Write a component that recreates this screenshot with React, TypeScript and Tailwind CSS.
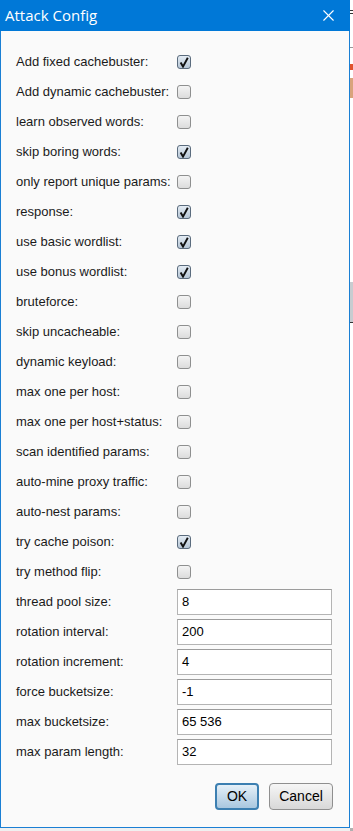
import { X } from "lucide-react"

type CheckRow = { label: string; checked: boolean }
type FieldRow = { label: string; value: string }

const checks: CheckRow[] = [
    { label: "Add fixed cachebuster:", checked: true },
    { label: "Add dynamic cachebuster:", checked: false },
    { label: "learn observed words:", checked: false },
    { label: "skip boring words:", checked: true },
    { label: "only report unique params:", checked: false },
    { label: "response:", checked: true },
    { label: "use basic wordlist:", checked: true },
    { label: "use bonus wordlist:", checked: true },
    { label: "bruteforce:", checked: false },
    { label: "skip uncacheable:", checked: false },
    { label: "dynamic keyload:", checked: false },
    { label: "max one per host:", checked: false },
    { label: "max one per host+status:", checked: false },
    { label: "scan identified params:", checked: false },
    { label: "auto-mine proxy traffic:", checked: false },
    { label: "auto-nest params:", checked: false },
    { label: "try cache poison:", checked: true },
    { label: "try method flip:", checked: false },
]

const fields: FieldRow[] = [
    { label: "thread pool size:", value: "8" },
    { label: "rotation interval:", value: "200" },
    { label: "rotation increment:", value: "4" },
    { label: "force bucketsize:", value: "-1" },
    { label: "max bucketsize:", value: "65 536" },
    { label: "max param length:", value: "32" },
]

function Box({ checked }: { checked: boolean }) {
    if (!checked) {
        return (
            <div className="w-[14px] h-[14px] rounded-[3px] border border-[#8e8f8f] bg-gradient-to-b from-[#f4f4f4] to-[#dcdcdc]" />
        )
    }
    return (
        <div className="w-[14px] h-[14px] rounded-[3px] border border-[#5a6b7d] bg-gradient-to-b from-[#e4ecf4] to-[#b6c6d6] flex items-center justify-center">
            <svg width="10" height="11" viewBox="0 0 10 11">
                <path d="M1.6 5.6 L4 9.6 L8.8 0.8" fill="none" stroke="#111" strokeWidth="1.9" />
            </svg>
        </div>
    )
}

export default function App() {
    return (
        <div className="w-[353px] h-[831px] flex bg-[#f0f0f0] overflow-hidden" style={{ fontFamily: '"Liberation Sans", Arial, sans-serif' }}>
            {/* dialog */}
            <div className="w-[350px] h-[828px] flex flex-col border-l border-r border-b border-[#1a7fd4] bg-[#fafafa] shrink-0">
                <div className="h-[31px] bg-[#0078d7] flex items-center justify-between pl-[5px] pr-[12px] -mx-px">
                    <span className="text-white text-[15px]" style={{ fontFamily: '"Open Sans", "Noto Sans", sans-serif' }}>Attack Config</span>
                    <X className="text-white w-[19px] h-[19px]" strokeWidth={1.4} />
                </div>

                <div className="pt-[16px] pl-[15px] flex flex-col text-[13px] text-[#1a1a1a]">
                    {checks.map((c) => (
                        <div key={c.label} className="h-[30px] flex items-center">
                            <div className="w-[161px] whitespace-nowrap">{c.label}</div>
                            <Box checked={c.checked} />
                        </div>
                    ))}
                    {fields.map((f) => (
                        <div key={f.label} className="h-[30px] flex items-center">
                            <div className="w-[161px]">{f.label}</div>
                            <div className="w-[155px] h-[26px] bg-white border border-[#b4b4b4] border-t-[#9c9c9c] flex items-center pl-[4px] text-[13px] text-black">
                                {f.value}
                            </div>
                        </div>
                    ))}
                </div>

                <div className="mt-[16px] flex justify-end gap-[10px] pr-[16px]">
                    <button className="w-[44px] h-[27px] rounded-[4px] border-2 border-[#3c7fb1] bg-gradient-to-b from-[#e5f0f8] to-[#a9c7df] text-[14px] text-black">
                        OK
                    </button>
                    <button className="w-[64px] h-[27px] rounded-[4px] border border-[#8f8f8f] bg-gradient-to-b from-[#f6f6f6] to-[#d8d8d8] text-[14px] text-black">
                        Cancel
                    </button>
                </div>
            </div>

            {/* window behind */}
            <div className="flex-1 flex flex-col bg-white">
                <div className="h-[10px]" />
                <div className="h-[1px] bg-[#333]" />
                <div className="h-[2px]" />
                <div className="h-[1px] bg-[#333]" />
                <div className="h-[33px]" />
                <div className="h-[1px] bg-[#999]" />
                <div className="h-[16px]" />
                <div className="h-[6px] bg-[#e0522e]" />
                <div className="h-[8px]" />
                <div className="h-[20px] bg-[#d9a37c]" />
                <div className="h-[184px]" />
                <div className="h-[40px] bg-[#c8ccd0]" />
                <div className="h-[1px] bg-[#333]" />
                <div className="flex-1" />
                <div className="h-[3px] bg-[#b0b0b0]" />
            </div>
        </div>
    )
}
